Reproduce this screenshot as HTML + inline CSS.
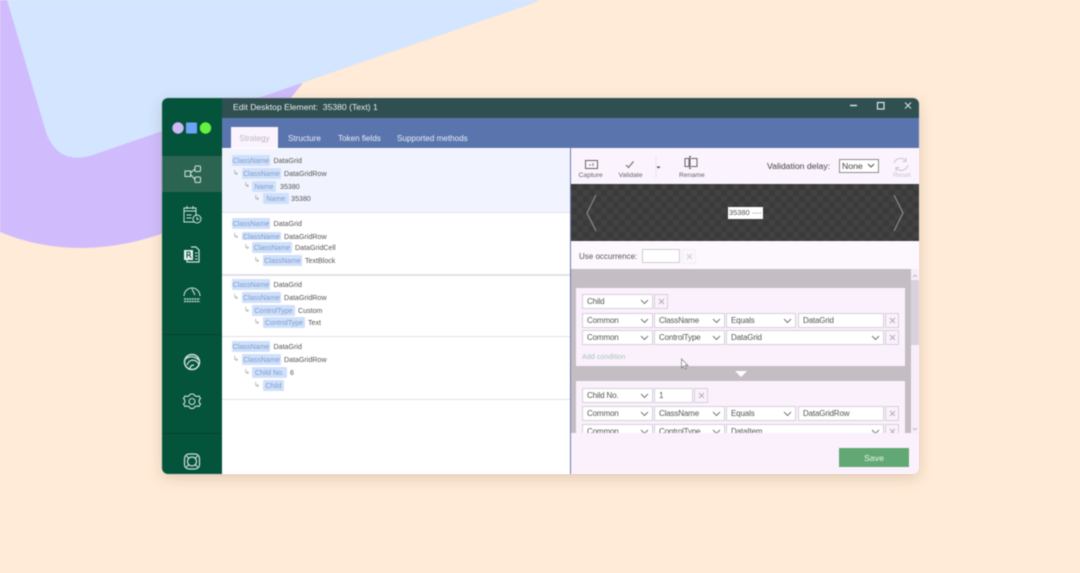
<!DOCTYPE html>
<html><head><meta charset="utf-8">
<style>
html,body{margin:0;padding:0;width:1080px;height:573px;overflow:hidden;background:#ffebd7;font-family:"Liberation Sans",sans-serif}
#bg{position:absolute;left:0;top:0;filter:blur(.5px)}
#win{position:absolute;left:162px;top:98px;width:757px;height:376px;border-radius:6px;overflow:hidden;background:#fbf1fd;box-shadow:0 4px 14px rgba(120,90,70,.22)}
#stage{position:absolute;left:0;top:0;width:1080px;height:573px;filter:blur(.55px)}
.a{position:absolute;white-space:nowrap}
.c{position:absolute;height:11px;line-height:12.5px;background:#cfe0fb;color:#7f9ccb;font-size:7.1px;text-align:center;border-radius:1px}
.t{position:absolute;height:11px;line-height:12.5px;color:#555;font-size:7.1px;white-space:nowrap}
.ar{position:absolute;color:#999;font-size:7px;line-height:8px}
.sep{position:absolute;left:222px;width:348px;height:1.5px;background:#e3e1e7}
.s{position:absolute;height:13px;background:#fff;border:1px solid #d6d0d8;font-size:8px;letter-spacing:-.15px;line-height:13px;color:#555;padding-left:4px;box-sizing:content-box;white-space:nowrap}
.s svg{position:absolute;right:3px;top:3.5px}
.x{position:absolute;width:12px;height:13px;border:1px solid #d6d0d8;background:#fbf1fd}
.x:before,.x:after{content:"";position:absolute;left:2.5px;top:6px;width:7px;height:1px;background:#b5adb7;transform:rotate(45deg)}
.x:after{transform:rotate(-45deg)}
.tab{position:absolute;top:134px;color:#e8edf8;font-size:8.1px;line-height:10px;white-space:nowrap}
.tb{position:absolute;color:#666;font-size:6.8px;line-height:8px;white-space:nowrap}
</style></head><body>
<svg id="bg" width="1080" height="573" viewBox="0 0 1080 573">
<path d="M0 0H320L302 84 286 104 161 234Q120 248 82 248 38 248 0 232Z" fill="#d0bcfd"/>
<path d="M7 0H539Q532 4 525 6L93 155Q58 166 46 132Z" fill="#d3e5ff"/>
</svg>
<div id="win"></div>
<div id="stage">
<div style="position:absolute;left:162px;top:98px;width:757px;height:376px;border-radius:6px;overflow:hidden">
<div class="a" style="left:0;top:0;width:60px;height:376px;background:#04533b"></div>
<div class="a" style="left:0;top:58px;width:60px;height:36px;background:#2b6552"></div>
<div class="a" style="left:0;top:236px;width:60px;height:1px;background:#03452f"></div>
<div class="a" style="left:0;top:335px;width:60px;height:1px;background:#03452f"></div>
<div class="a" style="left:60px;top:0;width:697px;height:20px;background:#2f4f50"></div>
<div class="a" style="left:60px;top:20px;width:697px;height:30px;background:#5a75ad"></div>
<div class="a" style="left:60px;top:50px;width:348px;height:326px;background:#fff"></div>
<div class="a" style="left:60px;top:51px;width:348px;height:63px;background:#f1f4fe"></div>
<div class="a" style="left:408px;top:50px;width:1px;height:326px;background:#6a7bab"></div>
<div class="a" style="left:409px;top:50px;width:348px;height:36px;background:#fbf3fd"></div>
<div class="a" style="left:409px;top:86px;width:348px;height:57px;background-color:#3a3a3a;background-image:linear-gradient(45deg,#424242 25%,transparent 25%,transparent 75%,#424242 75%),linear-gradient(45deg,#424242 25%,transparent 25%,transparent 75%,#424242 75%);background-size:12px 12px;background-position:0 0,6px 6px"></div>
<div class="a" style="left:409px;top:143px;width:348px;height:28px;background:#fdf8fe"></div>
<div class="a" style="left:409px;top:171px;width:340px;height:164px;background:#c4bdc4"></div>
<div class="a" style="left:749px;top:171px;width:8px;height:164px;background:#f8eefa"></div>
<div class="a" style="left:749px;top:182px;width:8px;height:65px;background:#d8d2dc"></div>
</div>

<div class="a" style="left:233px;top:102px;color:#e9eeee;font-size:8.6px;line-height:11px">Edit Desktop Element:&nbsp; 35380 (Text) 1</div>
<svg class="a" style="left:840px;top:98px" width="79" height="20" fill="none" stroke="#dfe7e7">
<path d="M10 7.500h7" stroke-width="1.400"/><rect x="37.500" y="4.500" width="6.500" height="6.500" stroke-width="1.200"/><path d="M65 4.500l6 6M71 4.500l-6 6" stroke-width="1"/>
</svg>

<div class="a" style="left:231px;top:127px;width:47px;height:21px;background:#fbf3fd;color:#b6b8c8;font-size:8.1px;line-height:23.5px;text-align:center">Strategy</div>
<div class="tab" style="left:288px">Structure</div>
<div class="tab" style="left:338px">Token fields</div>
<div class="tab" style="left:397px">Supported methods</div>

<svg class="a" style="left:162px;top:118px" width="60" height="20"><circle cx="16" cy="10" r="5.700" fill="#cdb9f5"/><rect x="24" y="4.500" width="11" height="11" rx="1" fill="#6aa5f5"/><circle cx="43.500" cy="10" r="5.700" fill="#66f040"/></svg>

<svg class="a" style="left:162px;top:156px" width="60" height="330" fill="none" stroke="#d3e2db" stroke-width="1">
<!-- flow -->
<rect x="23" y="15" width="5.500" height="5.500"/><rect x="33" y="10" width="5.500" height="5.500" rx="1"/><rect x="33" y="21" width="5.500" height="5.500" rx="1"/><path d="M28.500 17l4.500-4M28.500 18.500l4.500 5"/>
<!-- calendar clock -->
<path d="M34 60v-8h-12v14h10M25 50v3M31 50v3M22 55h12M24.500 59h5M24.500 62h5"/><circle cx="35" cy="63" r="4"/><path d="M35 61v2.200h2"/>
<!-- doc R -->
<path d="M29 91h5l3 3v12h-12v-3" stroke-width="1.200"/><rect x="22" y="94" width="9" height="10" fill="#e8f0ec" stroke="none"/><path d="M33 97h2.500M33 100h2.500M33 103h2.500"/><path d="M25 102v-6h2.500q1.500 1.500 0 3h-2.500M27.500 99l1.500 3" stroke="#04533b"/>
<!-- gauge -->
<path d="M22 140a8 8 0 0 1 16 0M33 139l-3-6"/><path d="M22 143h16M22 145.500h16" stroke-dasharray="2 .6" stroke-width="1.300"/>
<!-- globe -->
<circle cx="30" cy="206" r="7.500" stroke-width="1.500"/><path d="M23.500 203q7-5 13 1M25 209q3-7 9-4 3 2 3 5M28 213q0-4 4-4" stroke-width="1.200"/>
<!-- gear -->
<path d="M27.500 239l1-1.500h3l1 1.500 2.500 1 2-.5 1.500 2.500-1.300 1.500v2.500l1.300 1.500-1.500 2.500-2-.5-2.500 1-1 1.500h-3l-1-1.500-2.500-1-2 .5-1.500-2.500 1.300-1.500v-2.500l-1.300-1.500 1.500-2.500 2 .5z" transform="translate(0 .5)" stroke-width="1.100"/><circle cx="30" cy="245.500" r="3"/>
<!-- lifebuoy -->
<rect x="22.500" y="298" width="15" height="15" rx="4.500" stroke-width="1.200"/><circle cx="30" cy="305.500" r="4.500" stroke-width="1.200"/><path d="M24.500 300l2.500 2.500M35.500 300l-2.500 2.500M24.500 311l2.500-2.500M35.500 311l-2.500-2.500" stroke-width="1.200"/>
</svg>

<!-- left list -->
<div class="c" style="left:232px;top:155px;width:38px">ClassName</div><div class="t" style="left:273.500px;top:155px">DataGrid</div>
<div class="ar" style="left:233px;top:170px">↳</div><div class="c" style="left:242px;top:168px;width:39px">ClassName</div><div class="t" style="left:284px;top:168px">DataGridRow</div>
<div class="ar" style="left:244px;top:182px">↳</div><div class="c" style="left:252px;top:181px;width:24px">Name</div><div class="t" style="left:280px;top:181px">35380</div>
<div class="ar" style="left:254px;top:195px">↳</div><div class="c" style="left:263px;top:193px;width:26px">Name</div><div class="t" style="left:291px;top:193px">35380</div>
<div class="sep" style="top:211.500px"></div>

<div class="c" style="left:232px;top:218px;width:38px">ClassName</div><div class="t" style="left:273.500px;top:218px">DataGrid</div>
<div class="ar" style="left:233px;top:233px">↳</div>
<div class="a" style="left:222px;top:232px;width:300px;height:8px;overflow:hidden"><div class="c" style="left:20px;top:0;width:39px;height:9px;line-height:10px">ClassName</div><div class="t" style="left:62px;top:0;line-height:10px">DataGridRow</div></div>
<div class="ar" style="left:244px;top:244px">↳</div><div class="c" style="left:252px;top:242px;width:40px">ClassName</div><div class="t" style="left:295px;top:242px">DataGridCell</div>
<div class="ar" style="left:254px;top:257px">↳</div><div class="c" style="left:263px;top:255px;width:39px">ClassName</div><div class="t" style="left:305px;top:255px">TextBlock</div>
<div class="sep" style="top:274px"></div>

<div class="c" style="left:232px;top:279px;width:38px">ClassName</div><div class="t" style="left:273.500px;top:279px">DataGrid</div>
<div class="ar" style="left:233px;top:294px">↳</div><div class="c" style="left:242px;top:292px;width:39px">ClassName</div><div class="t" style="left:284px;top:292px">DataGridRow</div>
<div class="ar" style="left:244px;top:307px">↳</div><div class="c" style="left:252px;top:305px;width:43px">ControlType</div><div class="t" style="left:298px;top:305px">Custom</div>
<div class="ar" style="left:254px;top:319px">↳</div><div class="c" style="left:263px;top:317px;width:42px">ControlType</div><div class="t" style="left:308px;top:317px">Text</div>
<div class="sep" style="top:335.500px"></div>

<div class="c" style="left:232px;top:341px;width:38px">ClassName</div><div class="t" style="left:273.500px;top:341px">DataGrid</div>
<div class="ar" style="left:233px;top:356px">↳</div><div class="c" style="left:242px;top:354px;width:39px">ClassName</div><div class="t" style="left:284px;top:354px">DataGridRow</div>
<div class="ar" style="left:244px;top:369px">↳</div><div class="c" style="left:252px;top:367px;width:35px">Child No.</div><div class="t" style="left:290px;top:367px">6</div>
<div class="ar" style="left:254px;top:382px">↳</div><div class="c" style="left:263px;top:380px;width:21px">Child</div>
<div class="sep" style="top:398.500px"></div>

<!-- toolbar -->
<svg class="a" style="left:571px;top:150px" width="345" height="34" fill="none" stroke="#666">
<rect x="14.500" y="10.500" width="12" height="8"/><path d="M18 15h2M22 13v3" stroke-width=".8"/>
<path d="M55 15l2.500 2.500 5-6"/>
<path d="M85 6v22" stroke="#ece5ee"/>
<path d="M85.500 16.500l4 0-2 2z" fill="#444" stroke="none"/>
<path d="M114 8.500h4v8h-4zM120 8.500h6v8h-6M118 6.500h2M118 18.500h2M119 6.500v12"/>
<g stroke="#c9c8d0"><path d="M323 13a7 7 0 0 1 12-2M337 15a7 7 0 0 1-12 3"/><path d="M335 8v3.500h-3.500M325 21v-3.500h3.500"/></g>
</svg>
<div class="tb" style="left:578.500px;top:172px">Capture</div>
<div class="tb" style="left:618.500px;top:172px">Validate</div>
<div class="tb" style="left:679px;top:172px">Rename</div>
<div class="tb" style="left:893px;top:172px;color:#c9c8d0">Reset</div>
<div class="a" style="left:767px;top:161px;font-size:8.700px;line-height:11px;color:#444">Validation delay:</div>
<div class="a" style="left:839px;top:159px;width:38px;height:12px;border:1px solid #8d8d8d;background:#fff;font-size:8.700px;line-height:12px;color:#444;text-indent:2px">None<svg style="position:absolute;right:3px;top:3px" width="8" height="6" fill="none" stroke="#555"><path d="M1 1l3 3 3-3"/></svg></div>

<!-- preview strip -->
<svg class="a" style="left:571px;top:184px" width="348" height="57" fill="none" stroke="#8a8a8a" stroke-width="1.200">
<path d="M25 11L16 29l9 18M323 11l9 18-9 18"/>
</svg>
<div class="a" style="left:728px;top:207px;width:35px;height:12px;background:#fff;color:#555;font-size:7.400px;line-height:12px;text-indent:1px">35380 <span style="letter-spacing:-.5px">·····</span></div>

<!-- occurrence -->
<div class="a" style="left:579px;top:251px;font-size:8px;line-height:11px;color:#555">Use occurrence:</div>
<div class="a" style="left:642px;top:249px;width:36px;height:12px;border:1px solid #cfcdd2;background:#fff"></div>
<div class="x" style="left:682px;top:249px;border-color:#eee7f0;background:#fcf6fd;opacity:.6"></div>

<!-- card 1 -->
<div class="a" style="left:576px;top:288px;width:329px;height:78px;background:#fbf1fd"></div>
<div class="s" style="left:582px;top:294px;width:65px">Child<svg width="9" height="6" fill="none" stroke="#777"><path d="M1 1l3.500 3.500L8 1"/></svg></div>
<div class="x" style="left:654px;top:294px"></div>
<div class="s" style="left:582px;top:313px;width:65px">Common<svg width="9" height="6" fill="none" stroke="#777"><path d="M1 1l3.500 3.500L8 1"/></svg></div>
<div class="s" style="left:654px;top:313px;width:65px">ClassName<svg width="9" height="6" fill="none" stroke="#777"><path d="M1 1l3.500 3.500L8 1"/></svg></div>
<div class="s" style="left:726px;top:313px;width:64px">Equals<svg width="9" height="6" fill="none" stroke="#777"><path d="M1 1l3.500 3.500L8 1"/></svg></div>
<div class="s" style="left:798px;top:313px;width:80px">DataGrid</div>
<div class="x" style="left:885px;top:313px"></div>
<div class="s" style="left:582px;top:330px;width:65px">Common<svg width="9" height="6" fill="none" stroke="#777"><path d="M1 1l3.500 3.500L8 1"/></svg></div>
<div class="s" style="left:654px;top:330px;width:65px">ControlType<svg width="9" height="6" fill="none" stroke="#777"><path d="M1 1l3.500 3.500L8 1"/></svg></div>
<div class="s" style="left:726px;top:330px;width:152px">DataGrid<svg width="9" height="6" fill="none" stroke="#777"><path d="M1 1l3.500 3.500L8 1"/></svg></div>
<div class="x" style="left:885px;top:330px"></div>
<div class="a" style="left:582px;top:351.500px;font-size:7.200px;line-height:10px;color:#a9c4b9">Add condition</div>
<svg class="a" style="left:680px;top:358px" width="9" height="13" fill="#fff" stroke="#777" stroke-width=".7"><path d="M1.500 1v9l2-2 1.500 3 1.500-.7L5 7.500h3z"/></svg>
<svg class="a" style="left:735px;top:371px" width="12" height="6"><path d="M0 0h12L6 6z" fill="#fff"/></svg>

<!-- card 2 -->
<div class="a" style="left:576px;top:381px;width:329px;height:52px;background:#fbf1fd"></div>
<div class="s" style="left:582px;top:388px;width:65px">Child No.<svg width="9" height="6" fill="none" stroke="#777"><path d="M1 1l3.500 3.500L8 1"/></svg></div>
<div class="s" style="left:654px;top:388px;width:33px">1</div>
<div class="x" style="left:694px;top:388px"></div>
<div class="s" style="left:582px;top:406px;width:65px">Common<svg width="9" height="6" fill="none" stroke="#777"><path d="M1 1l3.500 3.500L8 1"/></svg></div>
<div class="s" style="left:654px;top:406px;width:65px">ClassName<svg width="9" height="6" fill="none" stroke="#777"><path d="M1 1l3.500 3.500L8 1"/></svg></div>
<div class="s" style="left:726px;top:406px;width:64px">Equals<svg width="9" height="6" fill="none" stroke="#777"><path d="M1 1l3.500 3.500L8 1"/></svg></div>
<div class="s" style="left:798px;top:406px;width:80px">DataGridRow</div>
<div class="x" style="left:885px;top:406px"></div>
<div class="a" style="left:572px;top:423px;width:338px;height:10px;overflow:hidden">
<div class="s" style="left:10px;top:1px;width:65px">Common<svg width="9" height="6" fill="none" stroke="#777"><path d="M1 1l3.500 3.500L8 1"/></svg></div>
<div class="s" style="left:82px;top:1px;width:65px">ControlType<svg width="9" height="6" fill="none" stroke="#777"><path d="M1 1l3.500 3.500L8 1"/></svg></div>
<div class="s" style="left:154px;top:1px;width:152px">DataItem<svg width="9" height="6" fill="none" stroke="#777"><path d="M1 1l3.500 3.500L8 1"/></svg></div>
<div class="x" style="left:313px;top:1px"></div>
</div>
<svg class="a" style="left:911px;top:271px" width="8" height="162" fill="none" stroke="#a9a3ad"><path d="M2 6l2-2 2 2M2 157l2 2 2-2" stroke-width=".7"/></svg>

<div class="a" style="left:839px;top:448px;width:70px;height:19px;background:#62a874;color:#e6f2e9;font-size:8.700px;line-height:20px;text-align:center">Save</div>
</div>
</body></html>
